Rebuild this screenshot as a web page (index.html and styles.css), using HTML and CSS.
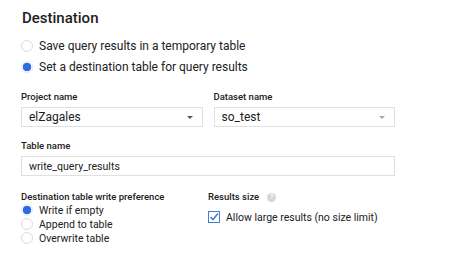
FILE: index.html
```html
<!DOCTYPE html>
<html>
<head>
	<title>Destination</title>
	<link rel="stylesheet" href="styles.css">
</head>
<body>
	<div class="panel">
		<h1>Destination</h1>
		<div class="choices">
			<label class="choice"><span class="radio"></span>Save query results in a temporary table</label>
			<label class="choice"><span class="radio on"></span>Set a destination table for query results</label>
		</div>

		<div class="row">
			<div class="field">
				<div class="label">Project name</div>
				<div class="select">elZagales<span class="arrow"></span></div>
			</div>
			<div class="field">
				<div class="label">Dataset name</div>
				<div class="select">so_test<span class="arrow light"></span></div>
			</div>
		</div>

		<div class="field table">
			<div class="label">Table name</div>
			<div class="input">write_query_results</div>
		</div>

		<div class="row bottom">
			<div class="group">
				<div class="label">Destination table write preference</div>
				<label class="choice small"><span class="radio on"></span>Write if empty</label>
				<label class="choice small"><span class="radio"></span>Append to table</label>
				<label class="choice small"><span class="radio"></span>Overwrite table</label>
			</div>
			<div class="group">
				<div class="label">Results size <span class="help">?</span></div>
				<label class="check">
					<svg width="12" height="12" viewBox="0 0 12 12">
						<rect x="0.5" y="0.5" width="11" height="11" fill="#fff" stroke="#4a7bd0" stroke-width="1"/>
						<path d="M2.5 6 L5 8.5 L10 2.5" fill="none" stroke="#4a7bd0" stroke-width="1.6"/>
					</svg>
					Allow large results (no size limit)
				</label>
			</div>
		</div>
	</div>
</body>
</html>
```

FILE: styles.css
```css
body {
	margin: 0;
	background: #fff;
	font-family: Roboto, "Liberation Sans", Arial, sans-serif;
	color: #212121;
}

.panel {
	padding: 8px 21px 0 21px;
	width: 374px;
}

h1 {
	font-size: 15px;
	font-weight: 500;
	margin: 0 0 7px 1px;
	line-height: 20px;
}

.choices {
	margin-bottom: 14px;
}

.choice {
	display: flex;
	align-items: center;
	font-size: 12px;
	height: 21px;
}

.radio {
	width: 10px;
	height: 10px;
	border: 1px solid #dcdcdc;
	border-radius: 50%;
	margin-right: 6px;
	flex: none;
	box-sizing: content-box;
}

.radio.on {
	border-color: #e3e9f6;
	background: radial-gradient(circle, #2f6ce0 0 4px, #fff 4.6px);
}

.row {
	display: flex;
	gap: 11px;
}

.row .field {
	flex: 1;
}

.field {
	margin-bottom: 13px;
}

.field.table {
	margin-bottom: 15px;
}

.label {
	font-size: 9.5px;
	font-weight: 500;
	line-height: 12px;
	margin-bottom: 4px;
	display: flex;
	align-items: center;
}

.select, .input {
	height: 18px;
	border: 1px solid #e0e0e0;
	display: flex;
	align-items: center;
	padding: 0 7px;
	font-size: 12px;
}

.input {
	font-size: 10.6px;
}

.arrow {
	margin-left: auto;
	width: 0;
	height: 0;
	border-left: 3.5px solid transparent;
	border-right: 3.5px solid transparent;
	border-top: 3.5px solid #555;
	margin-right: 2px;
}

.arrow.light {
	border-top-color: #aaa;
}

.bottom {
	gap: 0;
}

.bottom .group:first-child {
	width: 187px;
}

.group .label {
	margin-bottom: 0;
}

.choice.small {
	height: 14px;
	font-size: 10.5px;
}

.help {
	display: inline-block;
	width: 9px;
	height: 9px;
	border-radius: 50%;
	background: #d6d6d6;
	color: #fff;
	font-size: 7px;
	line-height: 9px;
	text-align: center;
	margin-left: 8px;
}

.check {
	display: flex;
	align-items: center;
	gap: 6px;
	height: 14px;
	font-size: 10.5px;
	margin-top: 7px;
}
```
